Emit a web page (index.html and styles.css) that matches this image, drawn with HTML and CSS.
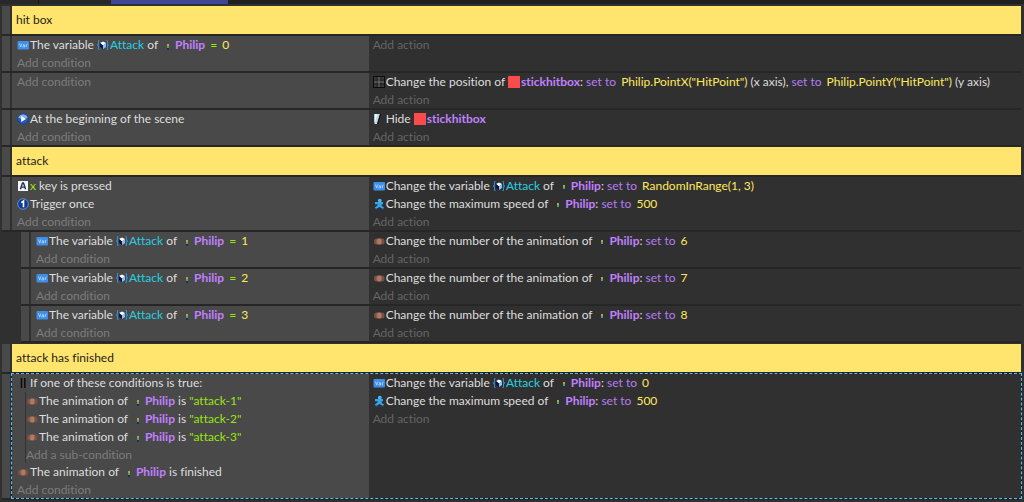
FILE: index.html
```html
<!doctype html>
<html lang="en">
<head>
  <meta charset="UTF-8">
  <meta name="viewport" content="width=device-width, initial-scale=1.0">
  <title>Events sheet</title>
  <link rel="stylesheet" href="styles.css">
</head>
<body>
  <svg class="defs" aria-hidden="true">
    <symbol id="i-var" viewBox="0 0 12 12">
      <rect x="0.5" y="2" width="11.5" height="8.5" rx="1" fill="#3f8fe8"/>
      <path d="M2.5 4.5l1.2 3.5 1.2-3.5M6 6q1.5-1 1.7 0v2q-2 .3-1.8-.7t1.8-.6M9.4 8V5.6q.5-.7 1.2-.5" fill="none" stroke="#b9dcff" stroke-width=".8"/>
    </symbol>
    <symbol id="i-struct" viewBox="0 0 12 12">
      <path d="M2.500 1.500H1.500V5.500H.5V6.500H1.500V10.500H2.500M9.500 1.500H10.500V5.500H11.500V6.500H10.500V10.500H9.500" fill="none" stroke="#2c93d6"/>
      <path d="M6 2.500L9 4 6 6.500 3 4z" fill="#fff"/>
      <path d="M3 4L6 6.500V10L3 8z" fill="#0b1256"/>
      <path d="M9 4L6 6.500V10L9 8z" fill="#8cc4f0"/>
    </symbol>
    <symbol id="i-philip" viewBox="0 0 12 12">
      <rect x="5" y="5" width="2" height="2" fill="#c99a45"/>
      <rect x="5" y="7" width="2" height="2" fill="#3fb054"/>
      <rect x="5" y="9" width="2" height="2" fill="#1d2a70"/>
    </symbol>
    <symbol id="i-box" viewBox="0 0 12 12">
      <rect width="12" height="12" fill="#fb4b4b"/>
    </symbol>
    <symbol id="i-play" viewBox="0 0 12 12">
      <circle cx="6" cy="6" r="5.600" fill="#2458b8"/>
      <path d="M1 5a5.200 5.200 0 0 1 10 0Q6 6.500 1 5z" fill="#83aeea"/>
      <circle cx="6" cy="6" r="5.300" fill="none" stroke="#16398a" stroke-width=".7"/>
      <path d="M4.200 3L9 6 4.200 9z" fill="#fff"/>
    </symbol>
    <symbol id="i-key" viewBox="0 0 12 12">
      <rect x="1" y="1" width="10" height="10" rx=".5" fill="#f4f7fa"/>
      <path d="M3.400 9.200L5.500 3h1l2.100 6.200M4.300 7.100h3.400" fill="none" stroke="#1c3350" stroke-width="1.400"/>
    </symbol>
    <symbol id="i-once" viewBox="0 0 12 12">
      <circle cx="6" cy="6" r="5.300" fill="#123a94" stroke="#5d9be0" stroke-width=".9"/>
      <path d="M4.300 4.600L6.500 3v6.200" fill="none" stroke="#fff" stroke-width="1.600"/>
    </symbol>
    <symbol id="i-position" viewBox="0 0 12 12">
      <rect x=".5" y=".5" width="11" height="11" fill="#3a3a3a" stroke="#0c0c0c"/>
      <path d="M4 1v10M8 1v10M1 4h10M1 8h10" stroke="#1f1f1f" stroke-width=".8"/>
      <path d="M6 1v10M1 6h10" stroke="#777" stroke-width=".8"/>
    </symbol>
    <symbol id="i-hide" viewBox="0 0 12 12">
      <path d="M1.500 1H7L4 11H1.500z" fill="#bcdcf5"/>
      <path d="M1.500 1H4L2.500 8 1.500 10z" fill="#f0f8ff"/>
      <path d="M7 1h1.300L5 11H4z" fill="#111"/>
    </symbol>
    <symbol id="i-speed" viewBox="0 0 12 12">
      <circle cx="6.800" cy="2.600" r="1.900" fill="#4bb8f5"/>
      <path d="M2 4h8v2.200H8.500L8.800 8 11 9.500 10 11 6.500 9 3 11 1.800 9.500 4.500 7.500V6.200H2z" fill="#35a5ea"/>
      <path d="M2 11.300h3M8 11.300h3" stroke="#174a86" stroke-width=".8"/>
    </symbol>
    <symbol id="i-anim" viewBox="0 0 12 12">
      <rect x="1" y="3.500" width="10.500" height="6" rx="2.500" fill="#795142"/>
      <ellipse cx="6.200" cy="6.500" rx="2.800" ry="3" fill="#b17a66"/>
      <path d="M4 4v5M8.500 4v5" stroke="#85594b" stroke-width=".6"/>
    </symbol>
    <symbol id="i-or" viewBox="0 0 12 12">
      <path d="M4.500 1v10M7.800 1v10" stroke="#0b0b0b" stroke-width="1.500"/>
    </symbol>
  </svg>

  <div class="tabs">
    <div class="tab tab-home"></div>
    <div class="tab tab-scene"></div>
    <div class="tab tab-active"></div>
  </div>

  <main class="sheet">
    <div class="event">
      <div class="handle"></div>
      <div class="comment">hit box</div>
    </div>

    <div class="event">
      <div class="handle"></div>
      <div class="conditions">
        <div class="item"><svg class="icon"><use href="#i-var"/></svg>The variable <svg class="icon"><use href="#i-struct"/></svg><span class="variable">Attack</span> of <svg class="icon sprite"><use href="#i-philip"/></svg><b class="object">Philip</b> <span class="operator">=</span> <span class="number">0</span></div>
        <button class="add" type="button">Add condition</button>
      </div>
      <div class="actions">
        <button class="add" type="button">Add action</button>
      </div>
    </div>

    <div class="event">
      <div class="handle"></div>
      <div class="conditions">
        <button class="add" type="button">Add condition</button>
      </div>
      <div class="actions">
        <div class="item"><svg class="icon"><use href="#i-position"/></svg>Change the position of <svg class="icon"><use href="#i-box"/></svg><b class="object">stickhitbox</b>: <span class="set">set to</span> <span class="number">Philip.PointX("HitPoint")</span> (x axis), <span class="set">set to</span> <span class="number">Philip.PointY("HitPoint")</span> (y axis)</div>
        <button class="add" type="button">Add action</button>
      </div>
    </div>

    <div class="event">
      <div class="handle"></div>
      <div class="conditions">
        <div class="item"><svg class="icon"><use href="#i-play"/></svg>At the beginning of the scene</div>
        <button class="add" type="button">Add condition</button>
      </div>
      <div class="actions">
        <div class="item"><svg class="icon"><use href="#i-hide"/></svg>Hide <svg class="icon"><use href="#i-box"/></svg><b class="object">stickhitbox</b></div>
        <button class="add" type="button">Add action</button>
      </div>
    </div>

    <div class="event">
      <div class="handle"></div>
      <div class="comment">attack</div>
    </div>

    <div class="event">
      <div class="handle"></div>
      <div class="conditions">
        <div class="item"><svg class="icon"><use href="#i-key"/></svg><span class="string">x</span> key is pressed</div>
        <div class="item"><svg class="icon"><use href="#i-once"/></svg>Trigger once</div>
        <button class="add" type="button">Add condition</button>
      </div>
      <div class="actions">
        <div class="item"><svg class="icon"><use href="#i-var"/></svg>Change the variable <svg class="icon"><use href="#i-struct"/></svg><span class="variable">Attack</span> of <svg class="icon sprite"><use href="#i-philip"/></svg><b class="object">Philip</b>: <span class="set">set to</span> <span class="number">RandomInRange(1, 3)</span></div>
        <div class="item"><svg class="icon"><use href="#i-speed"/></svg>Change the maximum speed of <svg class="icon sprite"><use href="#i-philip"/></svg><b class="object">Philip</b>: <span class="set">set to</span> <span class="number">500</span></div>
        <button class="add" type="button">Add action</button>
      </div>
    </div>

    <div class="sub-events">
      <div class="event">
        <div class="handle"></div>
        <div class="conditions">
          <div class="item"><svg class="icon"><use href="#i-var"/></svg>The variable <svg class="icon"><use href="#i-struct"/></svg><span class="variable">Attack</span> of <svg class="icon sprite"><use href="#i-philip"/></svg><b class="object">Philip</b> <span class="operator">=</span> <span class="number">1</span></div>
          <button class="add" type="button">Add condition</button>
        </div>
        <div class="actions">
          <div class="item"><svg class="icon"><use href="#i-anim"/></svg>Change the number of the animation of <svg class="icon sprite"><use href="#i-philip"/></svg><b class="object">Philip</b>: <span class="set">set to</span> <span class="number">6</span></div>
          <button class="add" type="button">Add action</button>
        </div>
      </div>

      <div class="event">
        <div class="handle"></div>
        <div class="conditions">
          <div class="item"><svg class="icon"><use href="#i-var"/></svg>The variable <svg class="icon"><use href="#i-struct"/></svg><span class="variable">Attack</span> of <svg class="icon sprite"><use href="#i-philip"/></svg><b class="object">Philip</b> <span class="operator">=</span> <span class="number">2</span></div>
          <button class="add" type="button">Add condition</button>
        </div>
        <div class="actions">
          <div class="item"><svg class="icon"><use href="#i-anim"/></svg>Change the number of the animation of <svg class="icon sprite"><use href="#i-philip"/></svg><b class="object">Philip</b>: <span class="set">set to</span> <span class="number">7</span></div>
          <button class="add" type="button">Add action</button>
        </div>
      </div>

      <div class="event">
        <div class="handle"></div>
        <div class="conditions">
          <div class="item"><svg class="icon"><use href="#i-var"/></svg>The variable <svg class="icon"><use href="#i-struct"/></svg><span class="variable">Attack</span> of <svg class="icon sprite"><use href="#i-philip"/></svg><b class="object">Philip</b> <span class="operator">=</span> <span class="number">3</span></div>
          <button class="add" type="button">Add condition</button>
        </div>
        <div class="actions">
          <div class="item"><svg class="icon"><use href="#i-anim"/></svg>Change the number of the animation of <svg class="icon sprite"><use href="#i-philip"/></svg><b class="object">Philip</b>: <span class="set">set to</span> <span class="number">8</span></div>
          <button class="add" type="button">Add action</button>
        </div>
      </div>
    </div>

    <div class="event">
      <div class="handle"></div>
      <div class="comment">attack has finished</div>
    </div>

    <div class="event">
      <div class="handle"></div>
      <div class="body selected">
        <div class="conditions">
          <div class="item"><svg class="icon"><use href="#i-or"/></svg>If one of these conditions is true:</div>
          <div class="sub-conditions">
            <div class="item"><svg class="icon"><use href="#i-anim"/></svg>The animation of <svg class="icon sprite"><use href="#i-philip"/></svg><b class="object">Philip</b> is <span class="string">"attack-1"</span></div>
            <div class="item"><svg class="icon"><use href="#i-anim"/></svg>The animation of <svg class="icon sprite"><use href="#i-philip"/></svg><b class="object">Philip</b> is <span class="string">"attack-2"</span></div>
            <div class="item"><svg class="icon"><use href="#i-anim"/></svg>The animation of <svg class="icon sprite"><use href="#i-philip"/></svg><b class="object">Philip</b> is <span class="string">"attack-3"</span></div>
            <button class="add" type="button">Add a sub-condition</button>
          </div>
          <div class="item"><svg class="icon"><use href="#i-anim"/></svg>The animation of <svg class="icon sprite"><use href="#i-philip"/></svg><b class="object">Philip</b> is finished</div>
          <button class="add" type="button">Add condition</button>
        </div>
        <div class="actions">
          <div class="item"><svg class="icon"><use href="#i-var"/></svg>Change the variable <svg class="icon"><use href="#i-struct"/></svg><span class="variable">Attack</span> of <svg class="icon sprite"><use href="#i-philip"/></svg><b class="object">Philip</b>: <span class="set">set to</span> <span class="number">0</span></div>
          <div class="item"><svg class="icon"><use href="#i-speed"/></svg>Change the maximum speed of <svg class="icon sprite"><use href="#i-philip"/></svg><b class="object">Philip</b>: <span class="set">set to</span> <span class="number">500</span></div>
          <button class="add" type="button">Add action</button>
        </div>
      </div>
    </div>
  </main>
</body>
</html>
```

FILE: styles.css
```css
* {
    box-sizing: border-box;
}

body {
    margin: 0;
    background: #303030;
    color: #dedede;
    font-family: Lato, "Open Sans", sans-serif;
    font-size: 12px;
    font-variant-ligatures: none;
}

.defs {
    display: none;
}

/* Editor tabs */
.tabs {
    display: flex;
    height: 4px;
    margin-bottom: 2px;
    background: #202020;
}

.tab {
    background: #282828;
}

.tab-home {
    width: 39px;
    border-right: 1px solid #1a1a1a;
}

.tab-scene {
    width: 72px;
}

.tab-active {
    width: 117px;
    background: #3f4695;
}

/* Events */
.sheet {
    --conditions-width: calc(36vw - 12px);
    padding: 0 3px 0 2px;
}

.event {
    display: flex;
    border-bottom: 2px solid #262626;
}

.sub-events {
    --conditions-width: calc(36vw - 31px);
    padding-left: 19px;
    padding-bottom: 1px;
}

.handle {
    flex: none;
    width: 8px;
    margin-right: 2px;
    background: #494949;
}

.comment {
    flex: 1;
    height: 28px;
    padding: 0 4px;
    line-height: 28px;
    background: #ffe56d;
    color: #1d1d1d;
}

.body {
    display: flex;
    flex: 1;
}

.selected {
    outline: 1px dashed #4cc3ff;
    box-shadow: 0 0 0 1px #1a1a1a;
}

.conditions {
    flex: none;
    width: var(--conditions-width);
    padding-left: 5px;
    background: #494949;
}

.actions {
    flex: 1;
    padding-left: 4px;
}

.item {
    height: 18px;
    line-height: 18px;
    white-space: nowrap;
}

.add {
    display: block;
    height: 17px;
    padding: 0;
    border: 0;
    background: none;
    color: #7c7c7c;
    font: inherit;
    font-variant-ligatures: inherit;
    line-height: 18px;
    cursor: pointer;
}

.actions .add {
    color: #646464;
}

.add:hover {
    text-decoration: underline;
}

.sub-conditions {
    margin-left: 8px;
    border-left: 1px solid #333;
}

.icon {
    width: 12px;
    height: 12px;
    margin-right: 1px;
    vertical-align: -2px;
}

.sprite {
    margin: 0 1px;
}

/* Instruction parameters */
.object {
    color: #c080ff;
}

.set {
    color: #b57cf5;
}

.variable {
    color: #25d0e2;
}

.number {
    margin-left: 2px;
    color: #ffe95c;
}

.operator {
    margin-left: 2px;
    color: #9ae70b;
}

.string {
    color: #9ae70b;
}
```
